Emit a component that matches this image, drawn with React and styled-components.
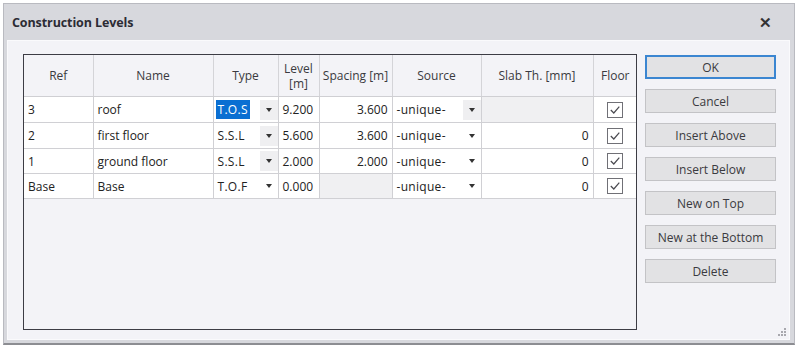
import React from "react";
import styled, { createGlobalStyle } from "styled-components";

const Global = createGlobalStyle`
  html, body { margin: 0; padding: 0; background: #ffffff; }
  body { font-family: "Open Sans", "Noto Sans", sans-serif; font-size: 12px; color: #222; }
`;

const Window = styled.div`
  margin: 3px 0 0 3px;
  width: 792px;
  height: 342px;
  border: 1px solid #b9bac0;
  border-bottom: 2px solid #8c8d92;
  background: #d7d8dd;
  box-sizing: border-box;
  display: flex;
  flex-direction: column;
`;

const TitleBar = styled.div`
  height: 36px;
  display: flex;
  align-items: center;
  justify-content: space-between;
  padding: 0 22px 0 8px;
  background: #d7d8dd;
  flex-shrink: 0;
`;

const Title = styled.div`
  font-weight: 700;
  font-size: 12.5px;
  color: #2c2c34;
  letter-spacing: -0.1px;
`;

const Close = styled.div`
  font-size: 15px;
  font-weight: 700;
  color: #333;
  line-height: 1;
`;

const Body = styled.div`
  flex: 1;
  margin: 0 4px 3px 3px;
  background: #f3f3f7;
  border: 1px solid #fafafc;
  padding: 13px 0 0 15px;
  display: flex;
  gap: 8px;
  position: relative;
`;

const GridBox = styled.div`
  width: 614px;
  height: 276px;
  border: 1px solid #3c3c44;
  box-sizing: border-box;
  background: #f3f3f7;
  overflow: hidden;
`;

const Table = styled.table`
  border-collapse: collapse;
  table-layout: fixed;
  width: 613px;
  font-size: 12px;
`;

const Th = styled.th`
  height: 41px;
  padding: 0;
  font-weight: 400;
  color: #3a3a40;
  text-align: center;
  line-height: 15px;
  border-right: 1px solid #d4d4d8;
  border-bottom: 1px solid #cfcfd3;
  background: #f3f3f7;
  &:last-child { border-right: none; }
`;

const HeadLine = styled.span`
  display: block;
  white-space: nowrap;
`;

const Td = styled.td`
  padding: 0 4px;
  background: ${({ $disabled }) => ($disabled ? "#f0f0f2" : "#ffffff")};
  text-align: ${({ $align }) => $align || "left"};
  border-right: 1px solid #d0d0d4;
  border-bottom: 1px solid #d0d0d4;
  white-space: nowrap;
  overflow: hidden;
  color: #222;
  &:last-child { border-right: none; }
`;

const Row = styled.tr`
  height: ${({ $h }) => $h}px;
`;

const ComboCell = styled.div`
  display: flex;
  align-items: center;
  justify-content: space-between;
  margin: 0 -4px 0 0;
`;

const ComboText = styled.span`
  padding: 1px 2px;
  margin-left: -2px;
  letter-spacing: 0.3px;
  background: ${({ $selected }) => ($selected ? "#0a6fd2" : "transparent")};
  color: ${({ $selected }) => ($selected ? "#ffffff" : "#222")};
`;

const ComboArrow = styled.span`
  width: 18px;
  height: 20px;
  display: flex;
  align-items: center;
  justify-content: center;
  background: ${({ $shade }) => ($shade ? "#efeff1" : "transparent")};
  &::after {
    content: "";
    border-left: 3px solid transparent;
    border-right: 3px solid transparent;
    border-top: 4px solid #333;
  }
`;

const Check = styled.div`
  width: 14px;
  height: 14px;
  margin: 0 auto;
  border: 1px solid #707076;
  background: #fff;
  display: flex;
  align-items: center;
  justify-content: center;
`;

const Buttons = styled.div`
  display: flex;
  flex-direction: column;
  gap: 10px;
  padding-top: 1px;
`;

const Button = styled.button`
  width: 131px;
  height: 24px;
  box-sizing: border-box;
  font-family: inherit;
  font-size: 12px;
  color: #3a3a40;
  background: #e2e2e4;
  border: ${({ $default }) => ($default ? "2px solid #3b86d1" : "1px solid #c3c3c6")};
  padding: 0;
  cursor: default;
`;

const Grip = styled.svg`
  position: absolute;
  right: 2px;
  bottom: 2px;
`;

const rows = [
  { ref: "3", name: "roof", type: "T.O.S", sel: true, level: "9.200", spacing: "3.600", slab: null, typeShade: true, srcShade: true },
  { ref: "2", name: "first floor", type: "S.S.L", level: "5.600", spacing: "3.600", slab: "0", typeShade: true },
  { ref: "1", name: "ground floor", type: "S.S.L", level: "2.000", spacing: "2.000", slab: "0", typeShade: true },
  { ref: "Base", name: "Base", type: "T.O.F", level: "0.000", spacing: null, slab: "0" },
];

const heights = [26, 26, 25, 25];

function Combo({ text, selected, shade }) {
  return (
    <ComboCell>
      <ComboText $selected={selected}>{text}</ComboText>
      <ComboArrow $shade={shade} />
    </ComboCell>
  );
}

function CheckIcon() {
  return (
    <Check>
      <svg width="12" height="12" viewBox="0 0 12 12">
        <path d="M1.8 6 L4.8 9 L10.3 2.6" fill="none" stroke="#4a4a50" strokeWidth="1.2" />
      </svg>
    </Check>
  );
}

export default function App() {
  return (
    <>
      <Global />
      <Window>
        <TitleBar>
          <Title>Construction Levels</Title>
          <Close>✕</Close>
        </TitleBar>
        <Body>
          <GridBox>
            <Table>
              <colgroup>
                <col style={{ width: 69 }} />
                <col style={{ width: 120 }} />
                <col style={{ width: 65 }} />
                <col style={{ width: 41 }} />
                <col style={{ width: 73 }} />
                <col style={{ width: 89 }} />
                <col style={{ width: 112 }} />
                <col style={{ width: 44 }} />
              </colgroup>
              <thead>
                <tr>
                  <Th>Ref</Th>
                  <Th>Name</Th>
                  <Th>Type</Th>
                  <Th>
                    <HeadLine>Level</HeadLine>
                    <HeadLine>[m]</HeadLine>
                  </Th>
                  <Th>Spacing [m]</Th>
                  <Th>Source</Th>
                  <Th>Slab Th. [mm]</Th>
                  <Th>Floor</Th>
                </tr>
              </thead>
              <tbody>
                {rows.map((r, i) => (
                  <Row key={r.ref} $h={heights[i]}>
                    <Td>{r.ref}</Td>
                    <Td>{r.name}</Td>
                    <Td><Combo text={r.type} selected={r.sel} shade={r.typeShade} /></Td>
                    <Td>{r.level}</Td>
                    <Td $align="right" $disabled={r.spacing === null}>{r.spacing}</Td>
                    <Td><Combo text="-unique-" shade={r.srcShade} /></Td>
                    <Td $align="right" $disabled={r.slab === null}>{r.slab}</Td>
                    <Td $align="center"><CheckIcon /></Td>
                  </Row>
                ))}
              </tbody>
            </Table>
          </GridBox>
          <Buttons>
            <Button $default>OK</Button>
            <Button>Cancel</Button>
            <Button>Insert Above</Button>
            <Button>Insert Below</Button>
            <Button>New on Top</Button>
            <Button>New at the Bottom</Button>
            <Button>Delete</Button>
          </Buttons>
          <Grip width="10" height="10" viewBox="0 0 10 10">
            {[[8, 2], [8, 5], [5, 5], [8, 8], [5, 8], [2, 8]].map(([x, y]) => (
              <rect key={`${x}-${y}`} x={x - 1} y={y - 1} width="2" height="2" fill="#a8a8ae" />
            ))}
          </Grip>
        </Body>
      </Window>
    </>
  );
}
